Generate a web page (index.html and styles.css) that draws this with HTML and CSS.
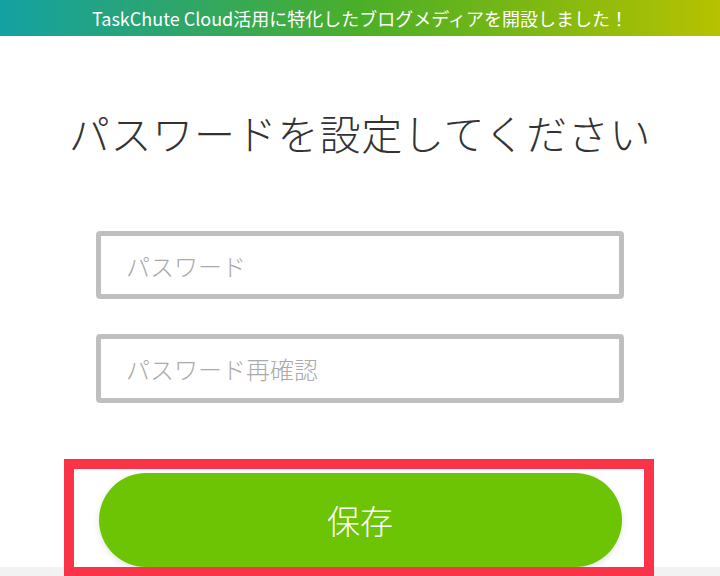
FILE: index.html
```html
<!DOCTYPE html>
<html lang="ja">
<head>
<meta charset="utf-8">
<title>パスワードを設定してください</title>
<link rel="stylesheet" href="styles.css">
</head>
<body>
<div class="banner">TaskChute Cloud活用に特化したブログメディアを開設しました！</div>
<main class="main">
  <h1 class="title">パスワードを設定してください</h1>
  <form class="form">
    <input class="field" type="password" placeholder="パスワード">
    <input class="field field-confirm" type="password" placeholder="パスワード再確認">
    <div class="actions">
      <div class="save-wrap">
        <button class="save" type="button">保存</button>
        <span class="highlight"></span>
      </div>
    </div>
  </form>
</main>
<div class="page-end"></div>
</body>
</html>
```

FILE: styles.css
```css
* { box-sizing: border-box; }
html {
  margin: 0;
  padding: 0;
  overflow: hidden;
  background: #f2f2f2;
}
body {
  margin: 0;
  padding: 0;
  font-family: "Noto Sans CJK JP", "Noto Sans", sans-serif;
}
.banner {
  height: 36px;
  background: linear-gradient(90deg, #14a1a3 0%, #2ea66a 25%, #4aaf28 50%, #7fb812 75%, #b7c200 100%);
  color: #ffffff;
  font-size: 18px;
  line-height: 36px;
  text-align: center;
  white-space: nowrap;
}
.main {
  background: #ffffff;
  padding-top: 71px;
  height: 531px;
}
.page-end {
  height: 20px;
  background: #f2f2f2;
}
.title {
  margin: 0;
  text-align: center;
  font-size: 41px;
  line-height: 50px;
  font-weight: 300;
  color: #333333;
  letter-spacing: 0.8px;
}
.form {
  display: flex;
  flex-direction: column;
  align-items: center;
  margin-top: 74px;
}
.field {
  width: 528px;
  height: 68px;
  border: 5px solid #bfbfbf;
  border-radius: 4px;
  padding: 0 0 0 25px;
  font-family: inherit;
  font-size: 24px;
  font-weight: 300;
  color: #333;
  outline: none;
  background: #fff;
}
.field::placeholder { color: #aaaaaa; }
.field-confirm { margin-top: 35px; height: 69px; }
.actions {
  margin-top: 70px;
  display: flex;
  justify-content: center;
}
.save-wrap { position: relative; z-index: 1; }
.save {
  display: block;
  width: 523px;
  height: 94px;
  border: none;
  border-radius: 47px;
  background: #6cc404;
  color: #ffffff;
  font-family: inherit;
  font-size: 33px;
  font-weight: 300;
  box-shadow: 0 2px 6px rgba(0, 0, 0, 0.12);
  cursor: pointer;
}
.highlight {
  position: absolute;
  top: -14px;
  left: -35px;
  right: -32px;
  bottom: -10px;
  border: 10px solid #f93448;
  pointer-events: none;
}
```
